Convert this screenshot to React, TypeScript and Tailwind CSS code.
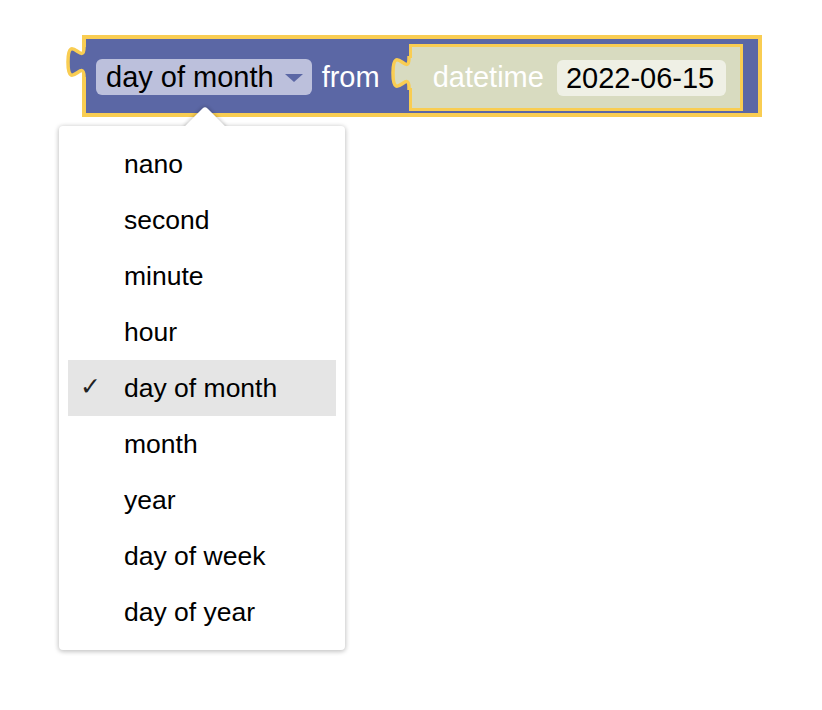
import React from "react";

const items = [
  "nano",
  "second",
  "minute",
  "hour",
  "day of month",
  "month",
  "year",
  "day of week",
  "day of year",
];

function Tab({ fill, stroke }: { fill: string; stroke: string }) {
  return (
    <svg width="26" height="36" viewBox="0 0 26 36" className="block">
      <path
        d="M24,2 L20,2 C20,22 4,-14 4,17 C4,48 20,12 20,32 L24,32 Z"
        fill={fill}
      />
      <path
        d="M20,0 L20,2 C20,22 4,-14 4,17 C4,48 20,12 20,32 L20,34"
        fill="none"
        stroke={stroke}
        strokeWidth="3.5"
      />
    </svg>
  );
}

export default function App() {
  return (
    <div
      className="relative w-[822px] h-[710px] bg-white overflow-hidden"
      style={{ fontFamily: '"Liberation Sans", Arial, Helvetica, sans-serif' }}
    >
      {/* Outer block */}
      <div className="absolute left-[82px] top-[35px] w-[680px] h-[82px] border-4 border-[#f9cd52] bg-[#5b67a5] flex items-start pl-[10px]">
        <div className="absolute left-[-22px] top-[6px]">
          <Tab fill="#5b67a5" stroke="#f9cd52" />
        </div>
        <div className="mt-[20px] h-[36px] rounded-[6px] bg-[#bcc0dc] flex items-center pl-[10px] pr-[9px]">
          <span className="text-[29px] leading-none text-black">day of month</span>
          <svg width="18" height="9" viewBox="0 0 18 9" className="ml-[11px] mt-[2px]">
            <path d="M0,0 L18,0 L9,8 Z" fill="#5b67a5" />
          </svg>
        </div>
        <span className="mt-[20px] h-[36px] flex items-center ml-[10px] text-[29px] leading-none text-white">
          from
        </span>
        {/* Inner block */}
        <div className="relative mt-[5px] ml-[29px] w-[334px] h-[67px] border-[3px] border-[#f9cd52] bg-[#d8dbc0] flex items-center pl-[21px]">
          <div className="absolute left-[-23px] top-[9px]">
            <Tab fill="#d8dbc0" stroke="#f9cd52" />
          </div>
          <span className="text-[29px] leading-none text-white">datetime</span>
          <div className="ml-[13px] mt-[1px] h-[36px] w-[169px] rounded-[6px] bg-[#eff0e5] flex items-center pl-[9px]">
            <span className="text-[29px] leading-none text-black">2022-06-15</span>
          </div>
        </div>
      </div>

      {/* Arrow shadow (behind menu) */}
      <div className="absolute left-[191px] top-[112px] w-[28px] h-[28px] rotate-45 rounded-tl-[4px] bg-white shadow-[0_0_4px_1px_rgba(0,0,0,0.22)]" />

      {/* Dropdown menu */}
      <div className="absolute left-[59px] top-[126px] w-[286px] h-[524px] bg-white rounded-[4px] shadow-[0_1px_4px_1px_rgba(0,0,0,0.22)] py-[10px] px-[9px]">
        {items.map((it) => {
          const sel = it === "day of month";
          return (
            <div
              key={it}
              className={
                "relative h-[56px] flex items-center pl-[56px] text-[26.5px] leading-none text-black " +
                (sel ? "bg-[#e5e5e5]" : "")
              }
            >
              {sel && (
                <span className="absolute left-[12px] top-[14px] text-[25px] leading-none text-[#222]" style={{ fontFamily: '"DejaVu Sans", sans-serif' }}>
                  ✓
                </span>
              )}
              {it}
            </div>
          );
        })}
      </div>

      {/* Arrow cover (above menu, no shadow) */}
      <div className="absolute left-[191px] top-[112px] w-[28px] h-[28px] rotate-45 rounded-tl-[4px] bg-white" />
    </div>
  );
}
